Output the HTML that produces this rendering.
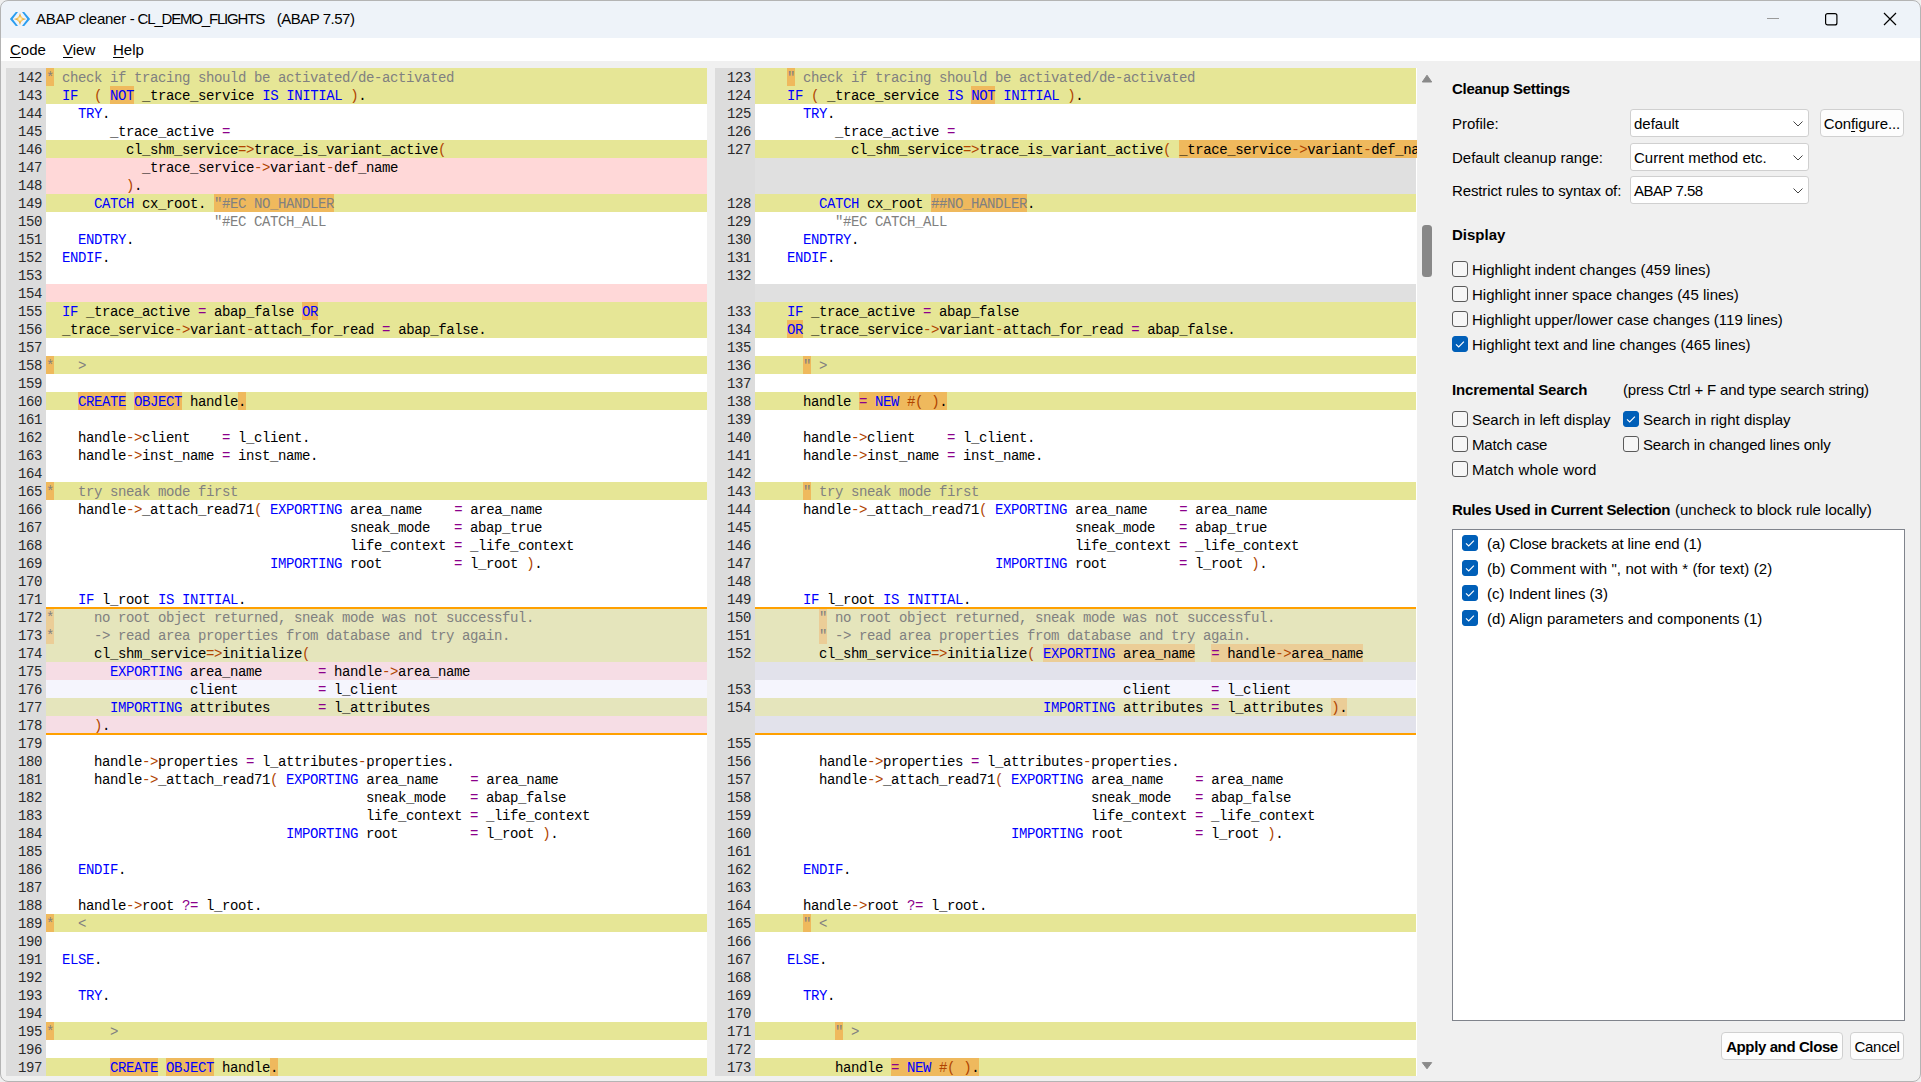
<!DOCTYPE html>
<html><head><meta charset="utf-8"><title>ABAP cleaner</title>
<style>
html,body{margin:0;padding:0;width:1921px;height:1082px;overflow:hidden;background:#efefef}
*{box-sizing:border-box}
#win{position:absolute;left:0;top:0;width:1921px;height:1082px;border-radius:8px;background:#f0f0f0;overflow:hidden;font-family:"Liberation Sans",sans-serif}
#frame{position:absolute;left:0;top:0;width:1921px;height:1082px;border:1px solid #b4b4b4;border-radius:8px;pointer-events:none}
#title{position:absolute;left:0;top:0;width:100%;height:38px;background:#eef3f9}
#title .tt{position:absolute;left:35px;top:10px;font-size:15px;color:#000;white-space:pre}
#title svg{position:absolute}
#menu{position:absolute;left:0;top:38px;width:100%;height:23px;background:#fff}
#menu span{position:absolute;top:3px;font-size:15px;color:#000}
#menu u{text-decoration:underline;text-underline-offset:2px}
.pane{position:absolute;top:68px;height:1008px;overflow:hidden;background:#fff;font-family:"Liberation Mono",monospace;font-size:14px;letter-spacing:-0.4px}
.pane.left{left:6px;width:701px}
.pane.right{left:715px;width:702px}
.gut{position:absolute;left:0;top:0;bottom:0;width:40px;background:#dcdcdc}
.r{position:absolute;left:40px;right:0;height:18px}
.right .r{right:1px}
.right .selt,.right .selb{right:1px}
.r .n{position:absolute;left:-40px;width:36px;text-align:right;top:1px;line-height:18px;color:#2a2a2a;background:#dcdcdc;height:18px}
.r .t{position:absolute;left:0;top:0;right:0;height:18px;line-height:18px;white-space:pre;color:#000}
.r .t b{position:absolute;top:0;height:18px;background:#efb95d}
.r .t span{position:relative;top:1px}
.w{background:#fff}
.y{background:#e6e696}
.p{background:#ffd8d8}
.g{background:#e0e0e0}
.W{background:#f5f5fd}
.Y{background:#e5e5bc}
.P{background:#f6dde5}
.G{background:#e2e2eb}
.Y .t b,.P .t b,.W .t b,.G .t b{background:#ebcd97}
i{font-style:normal}
i.k{color:#0000ff}
i.c{color:#808080}
i.o{color:#8b008b}
i.a{color:#b04400}
.selt,.selb{position:absolute;left:40px;right:0;height:2px;background:#ffa000}
.selt{top:539px}
.selb{top:665px}
#sb{position:absolute;left:1422px;top:225px;width:10px;height:52px;border-radius:3.5px;background:#888}
.tri{position:absolute;width:0;height:0;border-left:5px solid transparent;border-right:5px solid transparent}
#settings{position:absolute;left:0;top:0}
.lbl{position:absolute;font-size:15px;color:#000;white-space:pre}
.h{font-weight:bold}
.combo{position:absolute;left:1630px;width:179px;height:28px;background:#fff;border:1px solid #d0d0d0;border-radius:3px}
.combo span{position:absolute;left:3px;top:5px;font-size:15px}
.combo svg{position:absolute;right:5px;top:11px}
.btn u{text-decoration:underline;text-underline-offset:2px;text-decoration-thickness:1px}
.btn{position:absolute;background:#fdfdfd;border:1px solid #d0d0d0;border-radius:4px;font-size:15px;text-align:center}
.cb{position:absolute;width:16px;height:16px;border:1px solid #5a5a5a;border-radius:3px;background:#f6f6f6}
.cb.on{background:#005fb8;border-color:#005fb8}
.cb.on svg{position:absolute;left:2px;top:3px}
#list{position:absolute;left:1452px;top:529px;width:453px;height:492px;background:#fff;border:1px solid #80848c}

</style></head><body><div id="win">
<div id="title">
<svg style="left:0;top:0" width="40" height="38" viewBox="0 0 40 38"><defs><radialGradient id="sg" cx="0.5" cy="0.5" r="0.5"><stop offset="0" stop-color="#fffbea"/><stop offset="0.22" stop-color="#ffe39a"/><stop offset="0.5" stop-color="#f3b334"/><stop offset="1" stop-color="#a06a2a"/></radialGradient></defs><path d="M15.8 12.1 L18 12.1 L12.7 19 L18 25.9 L15.8 25.9 L9.9 19Z" fill="#2b9ef0"/><path d="M24.2 12.1 L22 12.1 L27.3 19 L22 25.9 L24.2 25.9 L30.1 19Z" fill="#2b9ef0"/><path d="M20 12.9 C20.4 16.4 22.6 18.6 26.1 19 C22.6 19.4 20.4 21.6 20 25.1 C19.6 21.6 17.4 19.4 13.9 19 C17.4 18.6 19.6 16.4 20 12.9Z" fill="url(#sg)"/></svg>
<div class="tt" style="letter-spacing:-0.27px;left:36px">ABAP cleaner -</div><div class="tt" style="letter-spacing:-1.19px;left:137.6px">CL_DEMO_FLIGHTS</div><div class="tt" style="letter-spacing:-0.5px;left:276.8px">(ABAP 7.57)</div>
<svg style="left:1767px;top:18px" width="14" height="2"><rect x="0" y="0" width="12" height="1" fill="#9a9a9a"/></svg>
<svg style="left:1824px;top:12px" width="15" height="15"><rect x="1.6" y="1.6" width="11.3" height="11.3" rx="2" fill="none" stroke="#000" stroke-width="1.2"/></svg>
<svg style="left:1883px;top:12px" width="14" height="14"><path d="M1 1L13 13M13 1L1 13" stroke="#000" stroke-width="1.2"/></svg>
</div>
<div id="menu"><span style="left:10px"><u>C</u>ode</span><span style="left:63px"><u>V</u>iew</span><span style="left:113px"><u>H</u>elp</span></div>
<div class="pane left"><div class="gut"></div>
<div class="r y" style="top:0px"><span class="n">142</span><div class="t"><b style="left:0px;width:8px"></b><span><i class="c">* check if tracing should be activated/de-activated</i></span></div></div>
<div class="r y" style="top:18px"><span class="n">143</span><div class="t"><b style="left:64px;width:24px"></b><span>  <i class="k">IF</i>  <i class="a">(</i> <i class="k">NOT</i> _trace_service <i class="k">IS</i> <i class="k">INITIAL</i> <i class="a">)</i>.</span></div></div>
<div class="r w" style="top:36px"><span class="n">144</span><div class="t"><span>    <i class="k">TRY</i>.</span></div></div>
<div class="r w" style="top:54px"><span class="n">145</span><div class="t"><span>        _trace_active <i class="o">=</i></span></div></div>
<div class="r y" style="top:72px"><span class="n">146</span><div class="t"><span>          cl_shm_service<i class="a">=&gt;</i>trace_is_variant_active<i class="a">(</i></span></div></div>
<div class="r p" style="top:90px"><span class="n">147</span><div class="t"><span>            _trace_service<i class="a">-&gt;</i>variant<i class="a">-</i>def_name</span></div></div>
<div class="r p" style="top:108px"><span class="n">148</span><div class="t"><span>          <i class="a">)</i>.</span></div></div>
<div class="r y" style="top:126px"><span class="n">149</span><div class="t"><b style="left:168px;width:120px"></b><span>      <i class="k">CATCH</i> cx_root. <i class="c">&quot;#EC NO_HANDLER</i></span></div></div>
<div class="r w" style="top:144px"><span class="n">150</span><div class="t"><span>                     <i class="c">&quot;#EC CATCH_ALL</i></span></div></div>
<div class="r w" style="top:162px"><span class="n">151</span><div class="t"><span>    <i class="k">ENDTRY</i>.</span></div></div>
<div class="r w" style="top:180px"><span class="n">152</span><div class="t"><span>  <i class="k">ENDIF</i>.</span></div></div>
<div class="r w" style="top:198px"><span class="n">153</span><div class="t"><span></span></div></div>
<div class="r p" style="top:216px"><span class="n">154</span><div class="t"><span></span></div></div>
<div class="r y" style="top:234px"><span class="n">155</span><div class="t"><b style="left:256px;width:16px"></b><span>  <i class="k">IF</i> _trace_active <i class="o">=</i> abap_false <i class="k">OR</i></span></div></div>
<div class="r y" style="top:252px"><span class="n">156</span><div class="t"><span>  _trace_service<i class="a">-&gt;</i>variant<i class="a">-</i>attach_for_read <i class="o">=</i> abap_false.</span></div></div>
<div class="r w" style="top:270px"><span class="n">157</span><div class="t"><span></span></div></div>
<div class="r y" style="top:288px"><span class="n">158</span><div class="t"><b style="left:0px;width:8px"></b><span><i class="c">*   &gt;</i></span></div></div>
<div class="r w" style="top:306px"><span class="n">159</span><div class="t"><span></span></div></div>
<div class="r y" style="top:324px"><span class="n">160</span><div class="t"><b style="left:32px;width:48px"></b><b style="left:88px;width:48px"></b><b style="left:192px;width:8px"></b><span>    <i class="k">CREATE</i> <i class="k">OBJECT</i> handle.</span></div></div>
<div class="r w" style="top:342px"><span class="n">161</span><div class="t"><span></span></div></div>
<div class="r w" style="top:360px"><span class="n">162</span><div class="t"><span>    handle<i class="a">-&gt;</i>client    <i class="o">=</i> l_client.</span></div></div>
<div class="r w" style="top:378px"><span class="n">163</span><div class="t"><span>    handle<i class="a">-&gt;</i>inst_name <i class="o">=</i> inst_name.</span></div></div>
<div class="r w" style="top:396px"><span class="n">164</span><div class="t"><span></span></div></div>
<div class="r y" style="top:414px"><span class="n">165</span><div class="t"><b style="left:0px;width:8px"></b><span><i class="c">*   try sneak mode first</i></span></div></div>
<div class="r w" style="top:432px"><span class="n">166</span><div class="t"><span>    handle<i class="a">-&gt;</i>_attach_read71<i class="a">(</i> <i class="k">EXPORTING</i> area_name    <i class="o">=</i> area_name</span></div></div>
<div class="r w" style="top:450px"><span class="n">167</span><div class="t"><span>                                      sneak_mode   <i class="o">=</i> abap_true</span></div></div>
<div class="r w" style="top:468px"><span class="n">168</span><div class="t"><span>                                      life_context <i class="o">=</i> _life_context</span></div></div>
<div class="r w" style="top:486px"><span class="n">169</span><div class="t"><span>                            <i class="k">IMPORTING</i> root         <i class="o">=</i> l_root <i class="a">)</i>.</span></div></div>
<div class="r w" style="top:504px"><span class="n">170</span><div class="t"><span></span></div></div>
<div class="r w" style="top:522px"><span class="n">171</span><div class="t"><span>    <i class="k">IF</i> l_root <i class="k">IS</i> <i class="k">INITIAL</i>.</span></div></div>
<div class="r Y" style="top:540px"><span class="n">172</span><div class="t"><b style="left:0px;width:8px"></b><span><i class="c">*     no root object returned, sneak mode was not successful.</i></span></div></div>
<div class="r Y" style="top:558px"><span class="n">173</span><div class="t"><b style="left:0px;width:8px"></b><span><i class="c">*     -&gt; read area properties from database and try again.</i></span></div></div>
<div class="r Y" style="top:576px"><span class="n">174</span><div class="t"><span>      cl_shm_service<i class="a">=&gt;</i>initialize<i class="a">(</i></span></div></div>
<div class="r P" style="top:594px"><span class="n">175</span><div class="t"><span>        <i class="k">EXPORTING</i> area_name       <i class="o">=</i> handle<i class="a">-&gt;</i>area_name</span></div></div>
<div class="r W" style="top:612px"><span class="n">176</span><div class="t"><span>                  client          <i class="o">=</i> l_client</span></div></div>
<div class="r Y" style="top:630px"><span class="n">177</span><div class="t"><span>        <i class="k">IMPORTING</i> attributes      <i class="o">=</i> l_attributes</span></div></div>
<div class="r P" style="top:648px"><span class="n">178</span><div class="t"><span>      <i class="a">)</i>.</span></div></div>
<div class="r w" style="top:666px"><span class="n">179</span><div class="t"><span></span></div></div>
<div class="r w" style="top:684px"><span class="n">180</span><div class="t"><span>      handle<i class="a">-&gt;</i>properties <i class="o">=</i> l_attributes<i class="a">-</i>properties.</span></div></div>
<div class="r w" style="top:702px"><span class="n">181</span><div class="t"><span>      handle<i class="a">-&gt;</i>_attach_read71<i class="a">(</i> <i class="k">EXPORTING</i> area_name    <i class="o">=</i> area_name</span></div></div>
<div class="r w" style="top:720px"><span class="n">182</span><div class="t"><span>                                        sneak_mode   <i class="o">=</i> abap_false</span></div></div>
<div class="r w" style="top:738px"><span class="n">183</span><div class="t"><span>                                        life_context <i class="o">=</i> _life_context</span></div></div>
<div class="r w" style="top:756px"><span class="n">184</span><div class="t"><span>                              <i class="k">IMPORTING</i> root         <i class="o">=</i> l_root <i class="a">)</i>.</span></div></div>
<div class="r w" style="top:774px"><span class="n">185</span><div class="t"><span></span></div></div>
<div class="r w" style="top:792px"><span class="n">186</span><div class="t"><span>    <i class="k">ENDIF</i>.</span></div></div>
<div class="r w" style="top:810px"><span class="n">187</span><div class="t"><span></span></div></div>
<div class="r w" style="top:828px"><span class="n">188</span><div class="t"><span>    handle<i class="a">-&gt;</i>root <i class="o">?=</i> l_root.</span></div></div>
<div class="r y" style="top:846px"><span class="n">189</span><div class="t"><b style="left:0px;width:8px"></b><span><i class="c">*   &lt;</i></span></div></div>
<div class="r w" style="top:864px"><span class="n">190</span><div class="t"><span></span></div></div>
<div class="r w" style="top:882px"><span class="n">191</span><div class="t"><span>  <i class="k">ELSE</i>.</span></div></div>
<div class="r w" style="top:900px"><span class="n">192</span><div class="t"><span></span></div></div>
<div class="r w" style="top:918px"><span class="n">193</span><div class="t"><span>    <i class="k">TRY</i>.</span></div></div>
<div class="r w" style="top:936px"><span class="n">194</span><div class="t"><span></span></div></div>
<div class="r y" style="top:954px"><span class="n">195</span><div class="t"><b style="left:0px;width:8px"></b><span><i class="c">*       &gt;</i></span></div></div>
<div class="r w" style="top:972px"><span class="n">196</span><div class="t"><span></span></div></div>
<div class="r y" style="top:990px"><span class="n">197</span><div class="t"><b style="left:64px;width:48px"></b><b style="left:120px;width:48px"></b><b style="left:224px;width:8px"></b><span>        <i class="k">CREATE</i> <i class="k">OBJECT</i> handle.</span></div></div>
<div class="selt"></div><div class="selb"></div></div>
<div class="pane right"><div class="gut"></div>
<div class="r y" style="top:0px"><span class="n">123</span><div class="t"><b style="left:32px;width:8px"></b><span>    <i class="c">&quot; check if tracing should be activated/de-activated</i></span></div></div>
<div class="r y" style="top:18px"><span class="n">124</span><div class="t"><b style="left:216px;width:24px"></b><span>    <i class="k">IF</i> <i class="a">(</i> _trace_service <i class="k">IS</i> <i class="k">NOT</i> <i class="k">INITIAL</i> <i class="a">)</i>.</span></div></div>
<div class="r w" style="top:36px"><span class="n">125</span><div class="t"><span>      <i class="k">TRY</i>.</span></div></div>
<div class="r w" style="top:54px"><span class="n">126</span><div class="t"><span>          _trace_active <i class="o">=</i></span></div></div>
<div class="r y" style="top:72px"><span class="n">127</span><div class="t"><b style="left:424px;width:344px"></b><span>            cl_shm_service<i class="a">=&gt;</i>trace_is_variant_active<i class="a">(</i> _trace_service<i class="a">-&gt;</i>variant<i class="a">-</i>def_name <i class="a">)</i>.</span></div></div>
<div class="r g" style="top:90px"><span class="n"></span><div class="t"><span></span></div></div>
<div class="r g" style="top:108px"><span class="n"></span><div class="t"><span></span></div></div>
<div class="r y" style="top:126px"><span class="n">128</span><div class="t"><b style="left:176px;width:96px"></b><span>        <i class="k">CATCH</i> cx_root <i class="c">##NO_HANDLER</i>.</span></div></div>
<div class="r w" style="top:144px"><span class="n">129</span><div class="t"><span>          <i class="c">&quot;#EC CATCH_ALL</i></span></div></div>
<div class="r w" style="top:162px"><span class="n">130</span><div class="t"><span>      <i class="k">ENDTRY</i>.</span></div></div>
<div class="r w" style="top:180px"><span class="n">131</span><div class="t"><span>    <i class="k">ENDIF</i>.</span></div></div>
<div class="r w" style="top:198px"><span class="n">132</span><div class="t"><span></span></div></div>
<div class="r g" style="top:216px"><span class="n"></span><div class="t"><span></span></div></div>
<div class="r y" style="top:234px"><span class="n">133</span><div class="t"><span>    <i class="k">IF</i> _trace_active <i class="o">=</i> abap_false</span></div></div>
<div class="r y" style="top:252px"><span class="n">134</span><div class="t"><b style="left:32px;width:16px"></b><span>    <i class="k">OR</i> _trace_service<i class="a">-&gt;</i>variant<i class="a">-</i>attach_for_read <i class="o">=</i> abap_false.</span></div></div>
<div class="r w" style="top:270px"><span class="n">135</span><div class="t"><span></span></div></div>
<div class="r y" style="top:288px"><span class="n">136</span><div class="t"><b style="left:48px;width:8px"></b><span>      <i class="c">&quot; &gt;</i></span></div></div>
<div class="r w" style="top:306px"><span class="n">137</span><div class="t"><span></span></div></div>
<div class="r y" style="top:324px"><span class="n">138</span><div class="t"><b style="left:104px;width:88px"></b><span>      handle <i class="o">=</i> <i class="k">NEW</i> <i class="a">#(</i> <i class="a">)</i>.</span></div></div>
<div class="r w" style="top:342px"><span class="n">139</span><div class="t"><span></span></div></div>
<div class="r w" style="top:360px"><span class="n">140</span><div class="t"><span>      handle<i class="a">-&gt;</i>client    <i class="o">=</i> l_client.</span></div></div>
<div class="r w" style="top:378px"><span class="n">141</span><div class="t"><span>      handle<i class="a">-&gt;</i>inst_name <i class="o">=</i> inst_name.</span></div></div>
<div class="r w" style="top:396px"><span class="n">142</span><div class="t"><span></span></div></div>
<div class="r y" style="top:414px"><span class="n">143</span><div class="t"><b style="left:48px;width:8px"></b><span>      <i class="c">&quot; try sneak mode first</i></span></div></div>
<div class="r w" style="top:432px"><span class="n">144</span><div class="t"><span>      handle<i class="a">-&gt;</i>_attach_read71<i class="a">(</i> <i class="k">EXPORTING</i> area_name    <i class="o">=</i> area_name</span></div></div>
<div class="r w" style="top:450px"><span class="n">145</span><div class="t"><span>                                        sneak_mode   <i class="o">=</i> abap_true</span></div></div>
<div class="r w" style="top:468px"><span class="n">146</span><div class="t"><span>                                        life_context <i class="o">=</i> _life_context</span></div></div>
<div class="r w" style="top:486px"><span class="n">147</span><div class="t"><span>                              <i class="k">IMPORTING</i> root         <i class="o">=</i> l_root <i class="a">)</i>.</span></div></div>
<div class="r w" style="top:504px"><span class="n">148</span><div class="t"><span></span></div></div>
<div class="r w" style="top:522px"><span class="n">149</span><div class="t"><span>      <i class="k">IF</i> l_root <i class="k">IS</i> <i class="k">INITIAL</i>.</span></div></div>
<div class="r Y" style="top:540px"><span class="n">150</span><div class="t"><b style="left:64px;width:8px"></b><span>        <i class="c">&quot; no root object returned, sneak mode was not successful.</i></span></div></div>
<div class="r Y" style="top:558px"><span class="n">151</span><div class="t"><b style="left:64px;width:8px"></b><span>        <i class="c">&quot; -&gt; read area properties from database and try again.</i></span></div></div>
<div class="r Y" style="top:576px"><span class="n">152</span><div class="t"><b style="left:288px;width:152px"></b><b style="left:456px;width:152px"></b><span>        cl_shm_service<i class="a">=&gt;</i>initialize<i class="a">(</i> <i class="k">EXPORTING</i> area_name  <i class="o">=</i> handle<i class="a">-&gt;</i>area_name</span></div></div>
<div class="r G" style="top:594px"><span class="n"></span><div class="t"><span></span></div></div>
<div class="r W" style="top:612px"><span class="n">153</span><div class="t"><span>                                              client     <i class="o">=</i> l_client</span></div></div>
<div class="r Y" style="top:630px"><span class="n">154</span><div class="t"><b style="left:576px;width:16px"></b><span>                                    <i class="k">IMPORTING</i> attributes <i class="o">=</i> l_attributes <i class="a">)</i>.</span></div></div>
<div class="r G" style="top:648px"><span class="n"></span><div class="t"><span></span></div></div>
<div class="r w" style="top:666px"><span class="n">155</span><div class="t"><span></span></div></div>
<div class="r w" style="top:684px"><span class="n">156</span><div class="t"><span>        handle<i class="a">-&gt;</i>properties <i class="o">=</i> l_attributes<i class="a">-</i>properties.</span></div></div>
<div class="r w" style="top:702px"><span class="n">157</span><div class="t"><span>        handle<i class="a">-&gt;</i>_attach_read71<i class="a">(</i> <i class="k">EXPORTING</i> area_name    <i class="o">=</i> area_name</span></div></div>
<div class="r w" style="top:720px"><span class="n">158</span><div class="t"><span>                                          sneak_mode   <i class="o">=</i> abap_false</span></div></div>
<div class="r w" style="top:738px"><span class="n">159</span><div class="t"><span>                                          life_context <i class="o">=</i> _life_context</span></div></div>
<div class="r w" style="top:756px"><span class="n">160</span><div class="t"><span>                                <i class="k">IMPORTING</i> root         <i class="o">=</i> l_root <i class="a">)</i>.</span></div></div>
<div class="r w" style="top:774px"><span class="n">161</span><div class="t"><span></span></div></div>
<div class="r w" style="top:792px"><span class="n">162</span><div class="t"><span>      <i class="k">ENDIF</i>.</span></div></div>
<div class="r w" style="top:810px"><span class="n">163</span><div class="t"><span></span></div></div>
<div class="r w" style="top:828px"><span class="n">164</span><div class="t"><span>      handle<i class="a">-&gt;</i>root <i class="o">?=</i> l_root.</span></div></div>
<div class="r y" style="top:846px"><span class="n">165</span><div class="t"><b style="left:48px;width:8px"></b><span>      <i class="c">&quot; &lt;</i></span></div></div>
<div class="r w" style="top:864px"><span class="n">166</span><div class="t"><span></span></div></div>
<div class="r w" style="top:882px"><span class="n">167</span><div class="t"><span>    <i class="k">ELSE</i>.</span></div></div>
<div class="r w" style="top:900px"><span class="n">168</span><div class="t"><span></span></div></div>
<div class="r w" style="top:918px"><span class="n">169</span><div class="t"><span>      <i class="k">TRY</i>.</span></div></div>
<div class="r w" style="top:936px"><span class="n">170</span><div class="t"><span></span></div></div>
<div class="r y" style="top:954px"><span class="n">171</span><div class="t"><b style="left:80px;width:8px"></b><span>          <i class="c">&quot; &gt;</i></span></div></div>
<div class="r w" style="top:972px"><span class="n">172</span><div class="t"><span></span></div></div>
<div class="r y" style="top:990px"><span class="n">173</span><div class="t"><b style="left:136px;width:88px"></b><span>          handle <i class="o">=</i> <i class="k">NEW</i> <i class="a">#(</i> <i class="a">)</i>.</span></div></div>
<div class="selt"></div><div class="selb"></div></div>
<svg style="position:absolute;left:1420px;top:73px" width="14" height="12"><path d="M2.3 9 L11.7 9 L7 2.2Z" fill="#8a8a8a" stroke="#8a8a8a" stroke-width="1" stroke-linejoin="round"/></svg>
<svg style="position:absolute;left:1420px;top:1060px" width="14" height="12"><path d="M2.3 2.6 L11.7 2.6 L7 8.8Z" fill="#8a8a8a" stroke="#8a8a8a" stroke-width="1" stroke-linejoin="round"/></svg>
<div id="sb"></div>
<div class="lbl h" style="left:1452px;top:80px;letter-spacing:-0.29px">Cleanup Settings</div>
<div class="lbl" style="left:1452px;top:115px">Profile:</div>
<div class="lbl" style="left:1452px;top:149px">Default cleanup range:</div>
<div class="lbl" style="left:1452px;top:182px;letter-spacing:-0.12px">Restrict rules to syntax of:</div>
<div class="combo" style="top:109px"><span>default</span><svg width="10" height="6"><path d="M0.5 0.5L5 5L9.5 0.5" fill="none" stroke="#444" stroke-width="1"/></svg></div>
<div class="combo" style="top:143px"><span>Current method etc.</span><svg width="10" height="6"><path d="M0.5 0.5L5 5L9.5 0.5" fill="none" stroke="#444" stroke-width="1"/></svg></div>
<div class="combo" style="top:176px"><span style="letter-spacing:-0.5px">ABAP 7.58</span><svg width="10" height="6"><path d="M0.5 0.5L5 5L9.5 0.5" fill="none" stroke="#444" stroke-width="1"/></svg></div>
<div class="btn" style="left:1820px;top:109px;width:84px;height:28px;line-height:27px;letter-spacing:-0.1px">Con<u>f</u>igure...</div>
<div class="lbl h" style="left:1452px;top:226px">Display</div>
<div class="cb" style="left:1452px;top:261px"></div><div class="lbl" style="left:1472px;top:261px">Highlight indent changes (459 lines)</div>
<div class="cb" style="left:1452px;top:286px"></div><div class="lbl" style="left:1472px;top:286px">Highlight inner space changes (45 lines)</div>
<div class="cb" style="left:1452px;top:311px"></div><div class="lbl" style="left:1472px;top:311px">Highlight upper/lower case changes (119 lines)</div>
<div class="cb on" style="left:1452px;top:336px"><svg width="11" height="9"><path d="M1 4.3L3.7 6.9L8.9 1.6" fill="none" stroke="#fff" stroke-width="1.15"/></svg></div><div class="lbl" style="left:1472px;top:336px">Highlight text and line changes (465 lines)</div>
<div class="lbl h" style="left:1452px;top:381px;letter-spacing:-0.18px">Incremental Search</div>
<div class="lbl" style="left:1623px;top:381px;letter-spacing:-0.16px">(press Ctrl + F and type search string)</div>
<div class="cb" style="left:1452px;top:411px"></div><div class="lbl" style="left:1472px;top:411px">Search in left display</div>
<div class="cb on" style="left:1623px;top:411px"><svg width="11" height="9"><path d="M1 4.3L3.7 6.9L8.9 1.6" fill="none" stroke="#fff" stroke-width="1.15"/></svg></div><div class="lbl" style="left:1643px;top:411px">Search in right display</div>
<div class="cb" style="left:1452px;top:436px"></div><div class="lbl" style="left:1472px;top:436px;letter-spacing:-0.14px">Match case</div>
<div class="cb" style="left:1623px;top:436px"></div><div class="lbl" style="left:1643px;top:436px;letter-spacing:-0.15px">Search in changed lines only</div>
<div class="cb" style="left:1452px;top:461px"></div><div class="lbl" style="left:1472px;top:461px;letter-spacing:0.23px">Match whole word</div>
<div class="lbl h" style="left:1452px;top:501px;letter-spacing:-0.33px">Rules Used in Current Selection</div><div class="lbl" style="left:1675px;top:501px">(uncheck to block rule locally)</div>
<div id="list"></div>
<div class="cb on" style="left:1462px;top:535px"><svg width="11" height="9"><path d="M1 4.3L3.7 6.9L8.9 1.6" fill="none" stroke="#fff" stroke-width="1.15"/></svg></div><div class="lbl" style="left:1487px;top:535px;letter-spacing:-0.09px">(a) Close brackets at line end (1)</div>
<div class="cb on" style="left:1462px;top:560px"><svg width="11" height="9"><path d="M1 4.3L3.7 6.9L8.9 1.6" fill="none" stroke="#fff" stroke-width="1.15"/></svg></div><div class="lbl" style="left:1487px;top:560px;letter-spacing:0.11px">(b) Comment with ", not with * (for text) (2)</div>
<div class="cb on" style="left:1462px;top:585px"><svg width="11" height="9"><path d="M1 4.3L3.7 6.9L8.9 1.6" fill="none" stroke="#fff" stroke-width="1.15"/></svg></div><div class="lbl" style="left:1487px;top:585px">(c) Indent lines (3)</div>
<div class="cb on" style="left:1462px;top:610px"><svg width="11" height="9"><path d="M1 4.3L3.7 6.9L8.9 1.6" fill="none" stroke="#fff" stroke-width="1.15"/></svg></div><div class="lbl" style="left:1487px;top:610px;letter-spacing:0.07px">(d) Align parameters and components (1)</div>
<div class="btn h" style="left:1721px;top:1032px;width:122px;height:28px;line-height:27px;letter-spacing:-0.39px">Apply and Close</div>
<div class="btn" style="left:1850px;top:1032px;width:54px;height:28px;line-height:27px;letter-spacing:-0.25px">Cancel</div>

</div><div id="frame"></div></body></html>
